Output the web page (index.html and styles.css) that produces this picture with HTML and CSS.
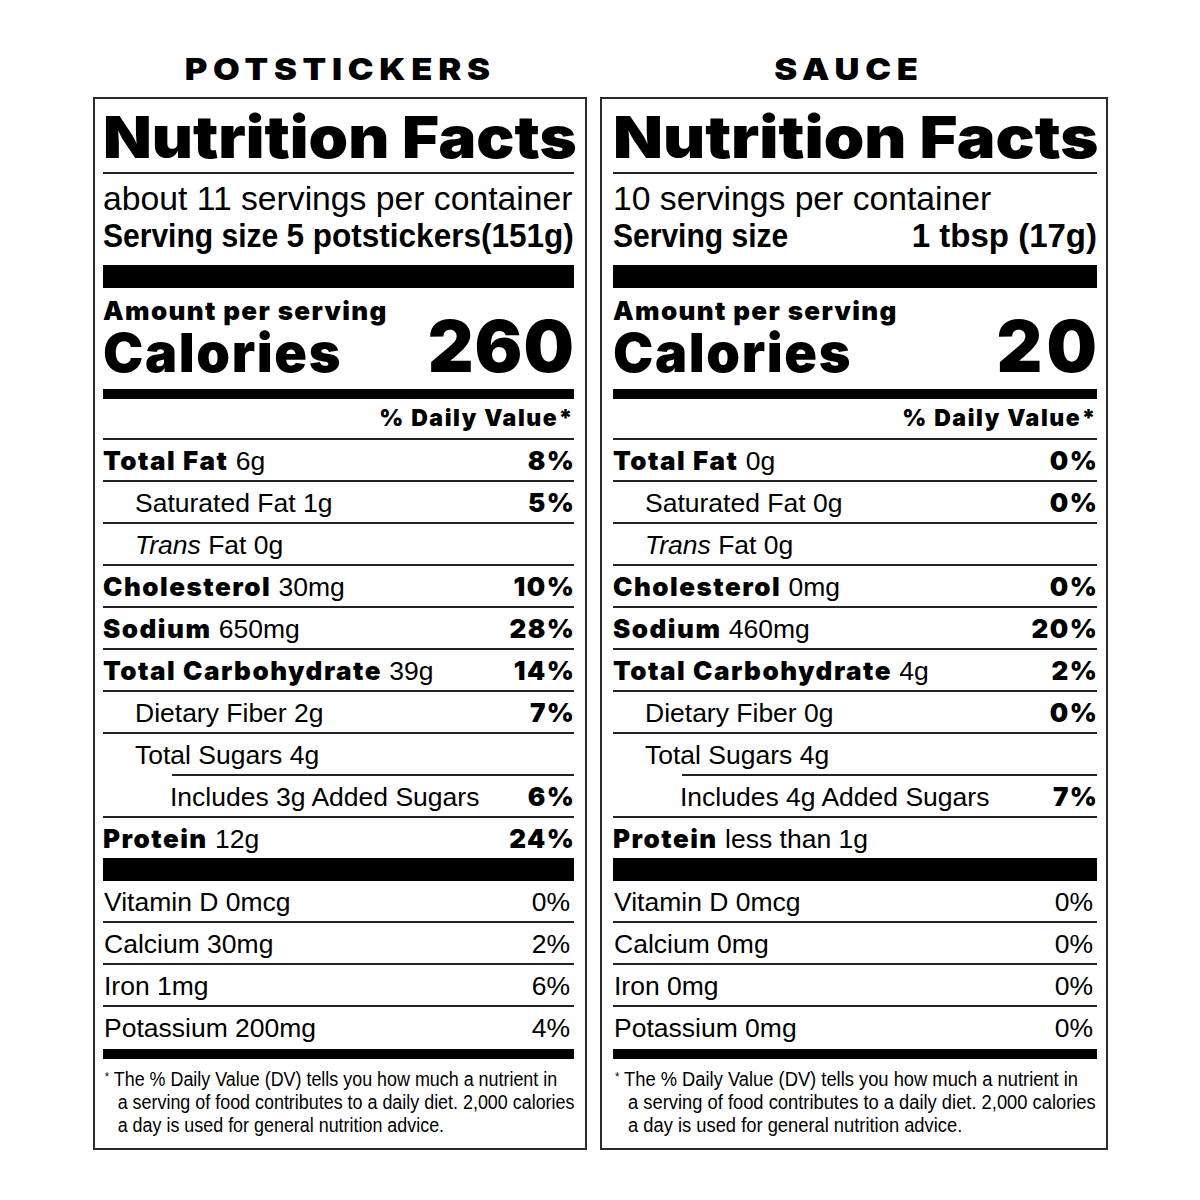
FILE: index.html
```html
<!DOCTYPE html>
<html lang="en">
<head>
<meta charset="utf-8">
<title>Nutrition Facts</title>
<link rel="stylesheet" href="styles.css">
</head>
<body>
<main class="page">
  <section class="panel panel--left">
    <h2 class="panel-title"><span>POTSTICKERS</span></h2>
    <div class="label">
      <h1 class="nf-title"><span>Nutrition Facts</span></h1>
      <div class="servings">
        <p class="servings-count">about 11 servings per container</p>
        <p class="serving-size"><span class="ss-label">Serving size</span><span class="ss-value">5 potstickers(151g)</span></p>
      </div>
      <div class="bar bar--thick"></div>
      <div class="calories">
        <p class="amount">Amount per serving</p>
        <div class="cal-row"><span class="cal-label">Calories</span><span class="cal-value">260</span></div>
      </div>
      <div class="bar bar--medium"></div>
      <div class="dv-head">% Daily Value*</div>
      <ul class="nutrients">
        <li class="row"><span><b>Total Fat</b> 6g</span><b>8%</b></li>
        <li class="row row--sub"><span>Saturated Fat 1g</span><b>5%</b></li>
        <li class="row row--sub"><span><i>Trans</i> Fat 0g</span></li>
        <li class="row"><span><b>Cholesterol</b> 30mg</span><b>10%</b></li>
        <li class="row"><span><b>Sodium</b> 650mg</span><b>28%</b></li>
        <li class="row"><span><b>Total Carbohydrate</b> 39g</span><b>14%</b></li>
        <li class="row row--sub"><span>Dietary Fiber 2g</span><b>7%</b></li>
        <li class="row row--sub row--sugars"><span>Total Sugars 4g</span></li>
        <li class="row row--sub2"><span>Includes 3g Added Sugars</span><b>6%</b></li>
        <li class="row row--last"><span><b>Protein</b> 12g</span><b>24%</b></li>
      </ul>
      <div class="bar bar--thick bar--flush"></div>
      <ul class="vitamins">
        <li class="row"><span>Vitamin D 0mcg</span><span class="pct">0%</span></li>
        <li class="row"><span>Calcium 30mg</span><span class="pct">2%</span></li>
        <li class="row"><span>Iron 1mg</span><span class="pct">6%</span></li>
        <li class="row row--end"><span>Potassium 200mg</span><span class="pct">4%</span></li>
      </ul>
      <div class="bar bar--medium"></div>
      <p class="footnote"><span class="footnote-text"><span class="star">*</span> The % Daily Value (DV) tells you how much a nutrient in<br>a serving of food contributes to a daily diet. 2,000 calories<br>a day is used for general nutrition advice.</span></p>
    </div>
  </section>

  <section class="panel panel--right">
    <h2 class="panel-title"><span>SAUCE</span></h2>
    <div class="label">
      <h1 class="nf-title"><span>Nutrition Facts</span></h1>
      <div class="servings">
        <p class="servings-count">10 servings per container</p>
        <p class="serving-size"><span class="ss-label">Serving size</span><span class="ss-value">1 tbsp (17g)</span></p>
      </div>
      <div class="bar bar--thick"></div>
      <div class="calories">
        <p class="amount">Amount per serving</p>
        <div class="cal-row"><span class="cal-label">Calories</span><span class="cal-value">20</span></div>
      </div>
      <div class="bar bar--medium"></div>
      <div class="dv-head">% Daily Value*</div>
      <ul class="nutrients">
        <li class="row"><span><b>Total Fat</b> 0g</span><b>0%</b></li>
        <li class="row row--sub"><span>Saturated Fat 0g</span><b>0%</b></li>
        <li class="row row--sub"><span><i>Trans</i> Fat 0g</span></li>
        <li class="row"><span><b>Cholesterol</b> 0mg</span><b>0%</b></li>
        <li class="row"><span><b>Sodium</b> 460mg</span><b>20%</b></li>
        <li class="row"><span><b>Total Carbohydrate</b> 4g</span><b>2%</b></li>
        <li class="row row--sub"><span>Dietary Fiber 0g</span><b>0%</b></li>
        <li class="row row--sub row--sugars"><span>Total Sugars 4g</span></li>
        <li class="row row--sub2"><span>Includes 4g Added Sugars</span><b>7%</b></li>
        <li class="row row--last"><span><b>Protein</b> less than 1g</span></li>
      </ul>
      <div class="bar bar--thick bar--flush"></div>
      <ul class="vitamins">
        <li class="row"><span>Vitamin D 0mcg</span><span class="pct">0%</span></li>
        <li class="row"><span>Calcium 0mg</span><span class="pct">0%</span></li>
        <li class="row"><span>Iron 0mg</span><span class="pct">0%</span></li>
        <li class="row row--end"><span>Potassium 0mg</span><span class="pct">0%</span></li>
      </ul>
      <div class="bar bar--medium"></div>
      <p class="footnote"><span class="footnote-text"><span class="star">*</span> The % Daily Value (DV) tells you how much a nutrient in<br>a serving of food contributes to a daily diet. 2,000 calories<br>a day is used for general nutrition advice.</span></p>
    </div>
  </section>
</main>
</body>
</html>
```

FILE: styles.css
```css
* {
  box-sizing: border-box;
  margin: 0;
  padding: 0;
}

body {
  background: #fff;
  color: #000;
  font-family: "Liberation Sans", Arial, sans-serif;
}

.page {
  display: flex;
  gap: 13px;
  padding-left: 93px;
}

.panel {
  display: flex;
  flex-direction: column;
}

.panel--left { width: 494px; }
.panel--right { width: 508px; }

.panel-title {
  font-family: Inter, "Liberation Sans", sans-serif;
  font-weight: 900;
  font-size: 30px;
  line-height: 30px;
  text-align: center;
  padding-top: 54px;
  margin-bottom: 13px;
}

.panel-title span {
  display: inline-block;
  letter-spacing: 5px;
  transform: scaleX(1.15);
}

.panel--right .panel-title {
  padding-right: 10px;
}

.label {
  border: 2px solid #2b2b2b;
  padding: 0 11px 0 8px;
}

.panel--right .label {
  padding: 0 9px 0 11px;
}

.nf-title {
  font-family: Inter, "Liberation Sans", sans-serif;
  font-weight: 900;
  font-size: 58px;
  line-height: 52px;
  padding-top: 12px;
  padding-bottom: 9px;
  border-bottom: 2px solid #222;
  white-space: nowrap;
}

.nf-title span {
  display: inline-block;
  transform: scaleX(1.093);
  transform-origin: left center;
}

.panel--right .nf-title span {
  transform: scaleX(1.12);
}

.servings {
  padding-top: 6px;
}

.servings-count {
  font-size: 33.7px;
  line-height: 37px;
  white-space: nowrap;
}

.serving-size {
  display: flex;
  justify-content: space-between;
  font-weight: 700;
  font-size: 33px;
  line-height: 37px;
  white-space: nowrap;
}

.ss-label {
  display: inline-block;
  flex: 0 1 auto;
  min-width: 0;
  transform: scaleX(0.91);
  transform-origin: left center;
}

.ss-value {
  display: inline-block;
  flex: 0 0 auto;
  transform: scaleX(0.955);
  transform-origin: right center;
}

.panel--right .ss-value {
  transform: none;
}

.bar {
  background: #000;
}

.bar--thick {
  height: 23px;
  margin-top: 11px;
}

.bar--flush {
  margin-top: 0;
}

.bar--medium {
  height: 10px;
}

.calories {
  padding: 9px 0 9px;
}

.amount {
  font-family: Inter, "Liberation Sans", sans-serif;
  font-weight: 900;
  font-size: 26px;
  line-height: 28px;
  letter-spacing: 1.35px;
}

.cal-row {
  display: flex;
  justify-content: space-between;
  align-items: baseline;
  line-height: 54px;
  font-family: Inter, "Liberation Sans", sans-serif;
  font-weight: 900;
}

.cal-label {
  font-size: 54px;
  letter-spacing: 1.6px;
}

.cal-value {
  font-size: 71px;
  line-height: 42px;
  letter-spacing: 1px;
  margin-right: -1px;
}

.panel--right .cal-value {
  letter-spacing: 4px;
  margin-right: -4px;
}

.dv-head {
  font-family: Inter, "Liberation Sans", sans-serif;
  font-weight: 900;
  font-size: 23px;
  line-height: 37px;
  padding-top: 1px;
  letter-spacing: 1.6px;
  text-align: right;
  border-bottom: 2px solid #222;
  height: 41px;
}

.nutrients,
.vitamins {
  list-style: none;
}

.row {
  display: flex;
  justify-content: space-between;
  align-items: baseline;
  height: 42px;
  padding-top: 2px;
  line-height: 38px;
  font-size: 26.5px;
  border-bottom: 2px solid #222;
  white-space: nowrap;
}

.row b {
  font-family: Inter, "Liberation Sans", sans-serif;
  font-weight: 900;
  font-size: 26px;
  letter-spacing: 1.5px;
}

.row > b:last-child {
  margin-right: -1.5px;
}

.row i {
  font-style: italic;
}

.row--sub {
  padding-left: 32px;
}

.row--sub2 {
  padding-left: 67px;
}

.row--sugars {
  border-bottom: none;
  background: linear-gradient(#222, #222) no-repeat right bottom / calc(100% - 69px) 2px;
}

.row--last {
  height: 40px;
  border-bottom: none;
}

.row--end {
  border-bottom: none;
}

.vitamins .row {
  padding-left: 1px;
}

.pct {
  padding-right: 4px;
}

.footnote {
  padding: 7px 0 11px;
  white-space: nowrap;
}

.footnote-text {
  display: inline-block;
  font-size: 19.5px;
  line-height: 23px;
  padding-left: 16px;
  text-indent: -14px;
  transform: scaleX(0.918);
  transform-origin: left top;
}

.panel--right .footnote-text {
  transform: scaleX(0.94);
}

.star {
  font-size: 12px;
  vertical-align: 5px;
}
```
